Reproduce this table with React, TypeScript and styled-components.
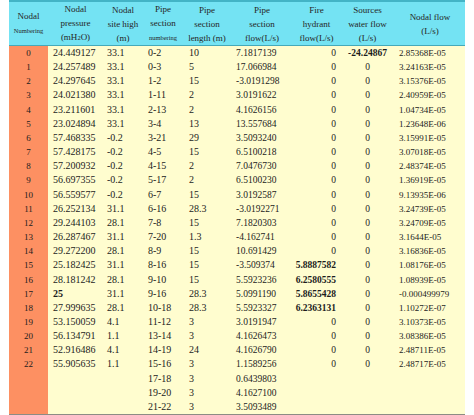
import React from "react";
import styled, { createGlobalStyle, css } from "styled-components";

const Global = createGlobalStyle`
  html, body { margin: 0; padding: 0; background: #ffffff; }
  body { font-family: "Liberation Serif", "Times New Roman", serif; color: #1a1a1a; }
`;

const Wrap = styled.div`
  padding-left: 9px;
  width: 456px;
`;

const Table = styled.table`
  border-collapse: collapse;
  table-layout: fixed;
  width: 456px;
  border-top: 2px solid #43b4c6;
  border-bottom: 2px solid #8c8c84;
`;

const HeadRow = styled.tr`
  background: #74e3f3;
  border-bottom: 1px solid #45a9b9;
`;

const Th = styled.th`
  height: 42px;
  padding: 0;
  font-weight: normal;
  font-size: 9px;
  line-height: 14px;
  text-align: center;
  vertical-align: middle;
  color: #262626;
`;

const Small = styled.span`
  font-size: 6.5px;
`;

type Align = "center" | "left" | "right";

const Td = styled.td<{ $align: Align; $pad?: number; $size?: number; $bold?: boolean; $orange?: boolean }>`
  height: 14.15px;
  padding: 0;
  font-size: ${(p) => p.$size ?? 10}px;
  line-height: 14.15px;
  white-space: nowrap;
  overflow: visible;
  text-align: ${(p) => p.$align};
  ${(p) =>
    p.$align === "left"
      ? css`padding-left: ${p.$pad ?? 4}px;`
      : p.$align === "right"
      ? css`padding-right: ${p.$pad ?? 4}px;`
      : ""}
  font-weight: ${(p) => (p.$bold ? "bold" : "normal")};
  background: ${(p) => (p.$orange ? "#fd9062" : "#fffdcf")};
  color: #1c1c1c;
`;

const cols = [39, 55, 40, 40, 48, 62, 47, 55, 70];

type Row = {
  n?: string;
  p?: string;
  pb?: boolean;
  h?: string;
  s: string;
  l: string;
  f: string;
  fh?: string;
  fhb?: boolean;
  sw?: string;
  swb?: boolean;
  nf?: string;
};

const rows: Row[] = [
  { n: "0", p: "24.449127", h: "33.1", s: "0-2", l: "10", f: "7.1817139", fh: "0", sw: "-24.24867", swb: true, nf: "2.85368E-05" },
  { n: "1", p: "24.257489", h: "33.1", s: "0-3", l: "5", f: "17.066984", fh: "0", sw: "0", nf: "3.24163E-05" },
  { n: "2", p: "24.297645", h: "33.1", s: "1-2", l: "15", f: "-3.0191298", fh: "0", sw: "0", nf: "3.15376E-05" },
  { n: "3", p: "24.021380", h: "33.1", s: "1-11", l: "2", f: "3.0191622", fh: "0", sw: "0", nf: "2.40959E-05" },
  { n: "4", p: "23.211601", h: "33.1", s: "2-13", l: "2", f: "4.1626156", fh: "0", sw: "0", nf: "1.04734E-05" },
  { n: "5", p: "23.024894", h: "33.1", s: "3-4", l: "13", f: "13.557684", fh: "0", sw: "0", nf: "1.23648E-06" },
  { n: "6", p: "57.468335", h: "-0.2", s: "3-21", l: "29", f: "3.5093240", fh: "0", sw: "0", nf: "3.15991E-05" },
  { n: "7", p: "57.428175", h: "-0.2", s: "4-5", l: "15", f: "6.5100218", fh: "0", sw: "0", nf: "3.07018E-05" },
  { n: "8", p: "57.200932", h: "-0.2", s: "4-15", l: "2", f: "7.0476730", fh: "0", sw: "0", nf: "2.48374E-05" },
  { n: "9", p: "56.697355", h: "-0.2", s: "5-17", l: "2", f: "6.5100230", fh: "0", sw: "0", nf: "1.36919E-05" },
  { n: "10", p: "56.559577", h: "-0.2", s: "6-7", l: "15", f: "3.0192587", fh: "0", sw: "0", nf: "9.13935E-06" },
  { n: "11", p: "26.252134", h: "31.1", s: "6-16", l: "28.3", f: "-3.0192271", fh: "0", sw: "0", nf: "3.24739E-05" },
  { n: "12", p: "29.244103", h: "28.1", s: "7-8", l: "15", f: "7.1820303", fh: "0", sw: "0", nf: "3.24709E-05" },
  { n: "13", p: "26.287467", h: "31.1", s: "7-20", l: "1.3", f: "-4.162741", fh: "0", sw: "0", nf: "3.1644E-05" },
  { n: "14", p: "29.272200", h: "28.1", s: "8-9", l: "15", f: "10.691429", fh: "0", sw: "0", nf: "3.16836E-05" },
  { n: "15", p: "25.182425", h: "31.1", s: "8-16", l: "15", f: "-3.509374", fh: "5.8887582", fhb: true, sw: "0", nf: "1.08176E-05" },
  { n: "16", p: "28.181242", h: "28.1", s: "9-10", l: "15", f: "5.5923236", fh: "6.2580555", fhb: true, sw: "0", nf: "1.08939E-05" },
  { n: "17", p: "25", pb: true, h: "31.1", s: "9-16", l: "28.3", f: "5.0991190", fh: "5.8655428", fhb: true, sw: "0", nf: "-0.000499979" },
  { n: "18", p: "27.999635", h: "28.1", s: "10-18", l: "28.3", f: "5.5923327", fh: "6.2363131", fhb: true, sw: "0", nf: "1.10272E-07" },
  { n: "19", p: "53.150059", h: "4.1", s: "11-12", l: "3", f: "3.0191947", fh: "0", sw: "0", nf: "3.10373E-05" },
  { n: "20", p: "56.134791", h: "1.1", s: "13-14", l: "3", f: "4.1626473", fh: "0", sw: "0", nf: "3.08386E-05" },
  { n: "21", p: "52.916486", h: "4.1", s: "14-19", l: "24", f: "4.1626790", fh: "0", sw: "0", nf: "2.48711E-05" },
  { n: "22", p: "55.905635", h: "1.1", s: "15-16", l: "3", f: "1.1589256", fh: "0", sw: "0", nf: "2.48717E-05" },
  { s: "17-18", l: "3", f: "0.6439803" },
  { s: "19-20", l: "3", f: "4.1627100" },
  { s: "21-22", l: "3", f: "3.5093489" },
];

export default function App() {
  return (
    <>
      <Global />
      <Wrap>
        <Table>
          <colgroup>
            {cols.map((w, i) => (
              <col key={i} style={{ width: w }} />
            ))}
          </colgroup>
          <thead>
            <HeadRow>
              <Th>
                Nodal
                <br />
                <Small>Numbering</Small>
              </Th>
              <Th>
                Nodal
                <br />
                pressure
                <br />
                (mH<Small>2</Small>O)
              </Th>
              <Th>
                Nodal
                <br />
                site high
                <br />
                (m)
              </Th>
              <Th>
                Pipe
                <br />
                section
                <br />
                <Small>numbering</Small>
              </Th>
              <Th>
                Pipe
                <br />
                section
                <br />
                length (m)
              </Th>
              <Th>
                Pipe
                <br />
                section
                <br />
                flow(L/s)
              </Th>
              <Th>
                Fire
                <br />
                hydrant
                <br />
                flow(L/s)
              </Th>
              <Th>
                Sources
                <br />
                water flow
                <br />
                (L/s)
              </Th>
              <Th>
                Nodal flow
                <br />
                (L/s)
              </Th>
            </HeadRow>
          </thead>
          <tbody>
            {rows.map((r, i) => (
              <tr key={i}>
                <Td $align="center" $size={9} $orange>{r.n ?? ""}</Td>
                <Td $align="left" $pad={5} $bold={r.pb}>{r.p ?? ""}</Td>
                <Td $align="left" $pad={4}>{r.h ?? ""}</Td>
                <Td $align="left" $pad={5}>{r.s}</Td>
                <Td $align="left" $pad={6}>{r.l}</Td>
                <Td $align="left" $pad={5} $size={9.5}>{r.f}</Td>
                <Td $align="right" $pad={4} $size={9.5} $bold={r.fhb}>{r.fh ?? ""}</Td>
                <Td $align="center" $size={9.5} $bold={r.swb}>{r.sw ?? ""}</Td>
                <Td $align="left" $pad={4} $size={9}>{r.nf ?? ""}</Td>
              </tr>
            ))}
          </tbody>
        </Table>
      </Wrap>
    </>
  );
}
